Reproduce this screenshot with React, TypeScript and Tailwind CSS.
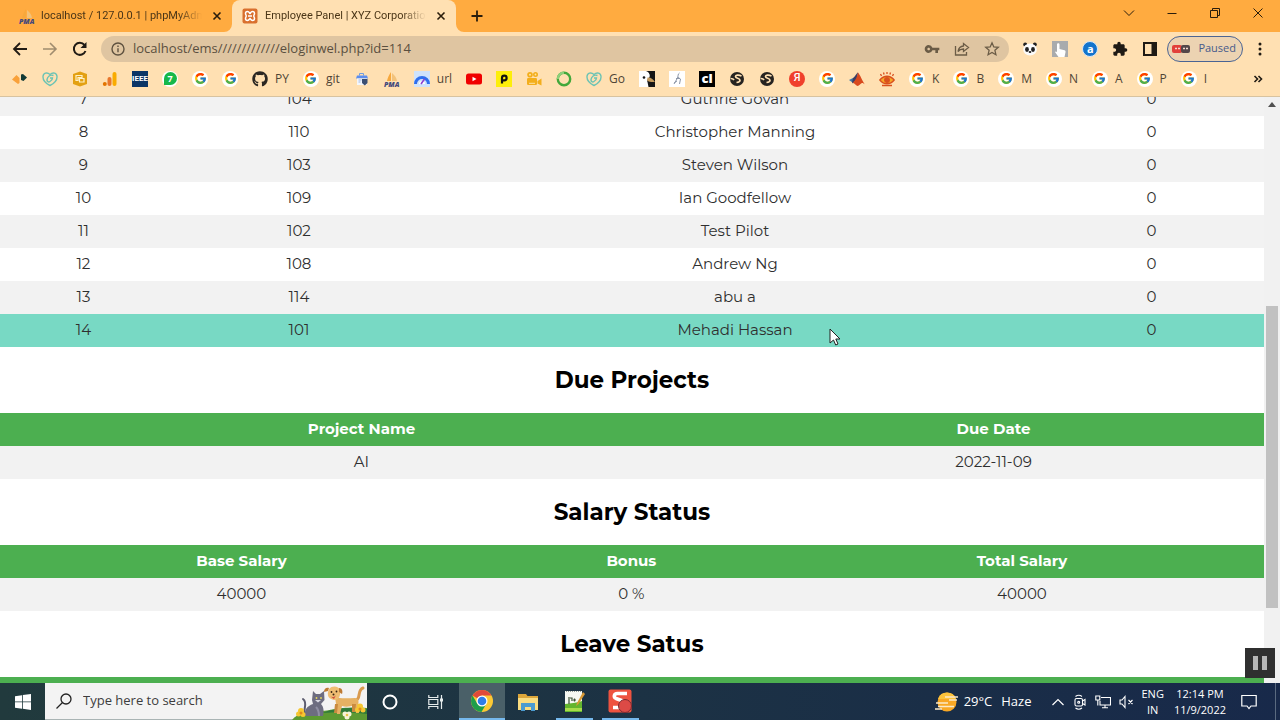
import type { ReactNode } from "react";
import { FaGithub } from "react-icons/fa";
import { FcGoogle } from "react-icons/fc";
import { MdExtension, MdVpnKey } from "react-icons/md";

const ranking = [
  { seq: 7, id: 104, name: "Guthrie Govan", points: 0 },
  { seq: 8, id: 110, name: "Christopher Manning", points: 0 },
  { seq: 9, id: 103, name: "Steven Wilson", points: 0 },
  { seq: 10, id: 109, name: "Ian Goodfellow", points: 0 },
  { seq: 11, id: 102, name: "Test Pilot", points: 0 },
  { seq: 12, id: 108, name: "Andrew Ng", points: 0 },
  { seq: 13, id: 114, name: "abu a", points: 0 },
  { seq: 14, id: 101, name: "Mehadi Hassan", points: 0 },
];

/* ---------- bookmark icons ---------- */

function Google() {
  return (
    <span className="flex size-4 items-center justify-center rounded-full bg-white">
      <FcGoogle className="size-[13px]" />
    </span>
  );
}

function Diamonds() {
  return (
    <svg viewBox="0 0 16 16" className="size-4">
      <path d="M0 8.500 4.500 4l3 3v5l-1.500 1Z" fill="#f9a13a" />
      <path d="M9 3.500 11 3l4 3.500L11.500 10 9 9Z" fill="#123a35" />
    </svg>
  );
}

function Loops() {
  return (
    <svg viewBox="0 0 16 16" className="size-4" fill="none" stroke="#6cc3b4" strokeWidth="1.400">
      <path d="M8 14.500C3 12 .8 8.500 1 5.500 1.200 2 5 .8 8 3.500c3-2.700 6.800-1.500 7 2C15.200 8.500 13 12 8 14.500Z" />
      <path d="M11.500 4.500C8 3 5.500 6 5 8.500c-.3 2 1.500 3 3 2 1.500-.8 2.500-2 2.500-3.500H8" />
    </svg>
  );
}

function GoldBox() {
  return (
    <svg viewBox="0 0 16 16" className="size-4">
      <path d="M8 .5 15 3v10l-7 2.500L1 13V3Z" fill="#e3a012" />
      <path d="M4 4.500h6v2H6v3H4ZM7.500 7.500H12V11H7.500Z" fill="none" stroke="#fff0c4" strokeWidth="1.200" />
    </svg>
  );
}

function Bars() {
  return (
    <svg viewBox="0 0 16 16" className="size-4">
      <rect x="10.500" y="1" width="4" height="14" rx="2" fill="#f9ab00" />
      <rect x="5.500" y="6" width="4" height="9" rx="2" fill="#e8762c" />
      <circle cx="2.800" cy="13" r="2" fill="#e37400" />
    </svg>
  );
}

function Ieee() {
  return (
    <span className="flex size-4 items-center justify-center bg-[#0b3566] font-['Roboto',sans-serif] text-[8px] font-bold text-white">
      IEEE
    </span>
  );
}

function Seven() {
  return (
    <span className="flex size-4 items-center justify-center rounded-full bg-white">
      <span className="flex size-[13px] items-center justify-center rounded-full rounded-bl-sm bg-[#17b84a] text-[9px] font-bold text-white">
        7
      </span>
    </span>
  );
}

function Shop() {
  return (
    <svg viewBox="0 0 16 16" className="size-4">
      <path d="M5.500 4.500V2.500h4v2" fill="none" stroke="#6f9de0" />
      <path d="M3 4.500h10l1 3H2Z" fill="#5b8def" />
      <path d="M3 7.500h10v6.500H3Z" fill="#f3f6fb" />
      <path d="M4.500 9h3M4.500 11h2" stroke="#9bb5e6" />
      <path d="M8 8h5.500v4l-2.700 2.500L8 12Z" fill="#3c4f73" />
    </svg>
  );
}

function Pma({ className = "size-4" }: { className?: string }) {
  return (
    <svg viewBox="0 0 16 16" className={className}>
      <path d="M7 1C5 4 3.500 7 3 10h4Z" fill="#f7a83c" />
      <path d="M8 2c3 2.500 4.500 5 5 8H8Z" fill="#f3c27a" />
      <text x="0" y="15.500" fontSize="7" fontWeight="800" fontStyle="italic" fontFamily="Open Sans, sans-serif" fill="#44497c">
        PMA
      </text>
    </svg>
  );
}

function Gauge() {
  return (
    <svg viewBox="0 0 16 16" className="size-4">
      <rect width="16" height="16" fill="#cfe3fb" />
      <path d="M1.500 13a6.500 6.500 0 0 1 13 0" fill="none" stroke="#2f6fed" strokeWidth="3" />
      <path d="M5 13a3 3 0 0 1 6 0Z" fill="#fff" />
      <path d="m7 13 3.500-5" stroke="#8a3fd1" strokeWidth="1.600" />
    </svg>
  );
}

function Youtube() {
  return (
    <svg viewBox="0 0 16 16" className="size-4">
      <rect x="0" y="2.500" width="16" height="11" rx="2.500" fill="#f00000" />
      <path d="m6.500 5.700 4 2.300-4 2.300Z" fill="#fff" />
    </svg>
  );
}

function YellowP() {
  return (
    <svg viewBox="0 0 16 16" className="size-4">
      <rect width="16" height="16" fill="#fdee0a" />
      <path d="M6 12.500V7a2.300 2.300 0 1 1 2.300 2.300H7" fill="none" stroke="#111" strokeWidth="2.200" />
    </svg>
  );
}

function Camera() {
  return (
    <svg viewBox="0 0 16 16" className="size-4" fill="#f3ae1c">
      <circle cx="4" cy="3.800" r="2.800" />
      <circle cx="9.500" cy="3.500" r="2.500" />
      <rect x="1" y="7" width="10" height="7" rx="1.200" />
      <path d="m11.500 10 4-2.500v7l-4-2Z" />
      <circle cx="4" cy="3.800" r="1" fill="#fde3a7" />
      <circle cx="9.500" cy="3.500" r=".9" fill="#fde3a7" />
      <path d="M3 12.300h6" stroke="#fde3a7" />
    </svg>
  );
}

function GreenRing() {
  return (
    <svg viewBox="0 0 16 16" className="size-4" fill="none" strokeWidth="2.400">
      <circle cx="8" cy="8" r="6.200" stroke="#43a83b" />
      <path d="M1.800 8A6.200 6.200 0 0 1 8 1.800" stroke="#8fcf7a" />
    </svg>
  );
}

function Bird() {
  return (
    <svg viewBox="0 0 16 16" className="size-4">
      <rect width="16" height="16" fill="#151515" />
      <path d="M0 0h7c3 1 4.500 4 3.500 6-1 2-3 3-2 5l1 5H0Z" fill="#fff" />
      <path d="M8.500 6.500c3-.5 5 1 7.500 4.500-3 .3-6 0-8-1.500Z" fill="#c49a5c" />
      <circle cx="5" cy="6.500" r="1.300" fill="#151515" />
    </svg>
  );
}

function Sketch() {
  return (
    <svg viewBox="0 0 16 16" className="size-4">
      <rect width="16" height="16" fill="#fff" />
      <path d="M10.500 2c-2 1-1 3-2 5L5 13M8.500 6l3 2-1 5M7 7.500h4M5 12l3-2" fill="none" stroke="#8d97a8" />
    </svg>
  );
}

function Cl() {
  return (
    <span className="flex size-4 items-center justify-center bg-black text-[13px] leading-none font-extrabold text-white">
      cl
    </span>
  );
}

function Globe() {
  return (
    <svg viewBox="0 0 16 16" className="size-4">
      <circle cx="8" cy="8" r="7" fill="#262320" />
      <path d="M12.500 5c-3-1.500-6-1-6 .5 0 2 4.500 1.500 4.500 3.700 0 1.300-1.500 2-3.500 2.300M1.500 7.500c2 0 3 .5 3.500 1.500" fill="none" stroke="#ffe0b2" strokeWidth="1.700" />
    </svg>
  );
}

function Yandex() {
  return (
    <span className="flex size-4 items-center justify-center rounded-full bg-[#f0402c] font-['Roboto',sans-serif] text-[11px] font-medium text-white">
      Я
    </span>
  );
}

function Matlab() {
  return (
    <svg viewBox="0 0 16 16" className="size-4">
      <path d="m0 9 4-2 2 2-2.500 2.500Z" fill="#3e77a8" />
      <path d="M4 7c2-1 3.500-5 5-5.500L8 8l-4 4.500-1-1Z" fill="#3b3f66" />
      <path d="M9 1.500c2 2 4 8 7 12-2-1.500-3-2-4.500-.5C10 14.500 9 15.500 7.500 14.500L4 11.500C6.500 9.500 8 6 9 1.500Z" fill="#d8491e" />
    </svg>
  );
}

function Eye() {
  return (
    <svg viewBox="0 0 16 16" className="size-4" fill="none" stroke="#d9501e" strokeWidth="1.300">
      <path d="M.8 9c4-5 10.400-5 14.400 0-4 5-10.400 5-14.400 0Z" fill="#f7a828" />
      <circle cx="8" cy="9" r="2.300" fill="#d9501e" />
      <path d="m1.500 3 1 2M4.500 1.500l.6 2M8 1v2M11.500 1.500l-.6 2M14.500 3l-1 2M3 14.500h10" />
    </svg>
  );
}

const bookmarks: { icon: ReactNode; label?: string }[] = [
  { icon: <Diamonds /> },
  { icon: <Loops /> },
  { icon: <GoldBox /> },
  { icon: <Bars /> },
  { icon: <Ieee /> },
  { icon: <Seven /> },
  { icon: <Google /> },
  { icon: <Google /> },
  { icon: <FaGithub className="size-4 text-[#2b2722]" />, label: "PY" },
  { icon: <Google />, label: "git" },
  { icon: <Shop /> },
  { icon: <Pma /> },
  { icon: <Gauge />, label: "url" },
  { icon: <Youtube /> },
  { icon: <YellowP /> },
  { icon: <Camera /> },
  { icon: <GreenRing /> },
  { icon: <Loops />, label: "Go" },
  { icon: <Bird /> },
  { icon: <Sketch /> },
  { icon: <Cl /> },
  { icon: <Globe /> },
  { icon: <Globe /> },
  { icon: <Yandex /> },
  { icon: <Google /> },
  { icon: <Matlab /> },
  { icon: <Eye /> },
  { icon: <Google />, label: "K" },
  { icon: <Google />, label: "B" },
  { icon: <Google />, label: "M" },
  { icon: <Google />, label: "N" },
  { icon: <Google />, label: "A" },
  { icon: <Google />, label: "P" },
  { icon: <Google />, label: "I" },
];

/* ---------- browser chrome ---------- */

function CloseX() {
  return (
    <svg viewBox="0 0 10 10" className="size-[10px]" stroke="#2a1d0c" strokeWidth="1.600">
      <path d="m1.500 1.500 7 7M8.500 1.500l-7 7" />
    </svg>
  );
}

function TabStrip() {
  return (
    <div className="flex h-8 bg-[#ffab40] font-['Roboto',sans-serif] text-[11px] text-[#4a3517]">
      <div className="flex w-[232px] items-center pr-2 pl-[19px]">
        <Pma className="mr-[6px] size-4 shrink-0" />
        <span className="min-w-0 flex-1 overflow-hidden mask-r-from-85% whitespace-nowrap">
          localhost / 127.0.0.1 | phpMyAdmin
        </span>
        <button aria-label="Close tab" className="ml-2 p-[2px]">
          <CloseX />
        </button>
      </div>
      <div className="relative flex w-[224px] items-center rounded-t-lg bg-[#ffe0b2] pr-2 pl-[10px]">
        <svg viewBox="0 0 8 8" className="absolute bottom-0 -left-2 size-2">
          <path d="M8 0v8H0a8 8 0 0 0 8-8Z" fill="#ffe0b2" />
        </svg>
        <svg viewBox="0 0 8 8" className="absolute -right-2 bottom-0 size-2">
          <path d="M0 0v8h8a8 8 0 0 1-8-8Z" fill="#ffe0b2" />
        </svg>
        <svg viewBox="0 0 16 16" className="mr-[7px] size-4 shrink-0">
          <rect x=".5" y=".5" width="15" height="15" rx="2" fill="#d9702e" />
          <path d="M5.500 3.500C7 3.500 7.500 5 8 5.500c.5-.5 1-2 2.500-2s2 1 2 2-.7 1.500-.7 2.500.7 1.500.7 2.500-.5 2-2 2-2-1.500-2.500-2c-.5.500-1 2-2.500 2s-2-1-2-2 .7-1.500.7-2.500-.7-1.500-.7-2.500.5-2 2-2Z" fill="none" stroke="#fff" strokeWidth="1.500" />
          <path d="M6 8h4" stroke="#fff" strokeWidth="1.500" />
        </svg>
        <span className="min-w-0 flex-1 overflow-hidden mask-r-from-85% whitespace-nowrap">
          Employee Panel | XYZ Corporation
        </span>
        <button aria-label="Close tab" className="ml-2 p-[2px]">
          <CloseX />
        </button>
      </div>
      <button aria-label="New tab" className="ml-[13px] p-[2px]">
        <svg viewBox="0 0 12 12" className="size-3" stroke="#2a1d0c" strokeWidth="1.800">
          <path d="M6 .5v11M.5 6h11" />
        </svg>
      </button>
      <div className="mr-px ml-auto flex h-[26px]">
        <button aria-label="Search tabs" className="flex w-[43px] items-center justify-center">
          <svg viewBox="0 0 12 12" className="size-3" fill="none" stroke="#2a1d0c">
            <path d="m1 3.500 5 5 5-5" />
          </svg>
        </button>
        <button aria-label="Minimize" className="flex w-[43px] items-center justify-center">
          <svg viewBox="0 0 12 12" className="size-3" stroke="#2a1d0c">
            <path d="M1.500 6.500h9" />
          </svg>
        </button>
        <button aria-label="Restore" className="flex w-[43px] items-center justify-center">
          <svg viewBox="0 0 12 12" className="size-3" fill="none" stroke="#2a1d0c">
            <path d="M1.500 3.500h7v7h-7ZM3.500 3.500v-2h7v7h-2" />
          </svg>
        </button>
        <button aria-label="Close" className="flex w-[43px] items-center justify-center">
          <svg viewBox="0 0 12 12" className="size-3" stroke="#2a1d0c">
            <path d="m1.500 1.500 9 9M10.500 1.500l-9 9" />
          </svg>
        </button>
      </div>
    </div>
  );
}

function Toolbar() {
  return (
    <div className="flex h-[33px] items-center pr-3 pl-3">
      <button aria-label="Back" className="mr-[14px]">
        <svg viewBox="0 0 16 16" className="size-4" fill="none" stroke="#211b14" strokeWidth="1.800">
          <path d="M15 8H2M8 2 2 8l6 6" />
        </svg>
      </button>
      <button aria-label="Forward" className="mr-[14px]">
        <svg viewBox="0 0 16 16" className="size-4" fill="none" stroke="#a08c6e" strokeWidth="1.600">
          <path d="M1 8h13M8 2l6 6-6 6" />
        </svg>
      </button>
      <button aria-label="Reload" className="mr-[13px]">
        <svg viewBox="0 0 16 16" className="size-4" fill="none" stroke="#211b14" strokeWidth="2">
          <path d="M13.500 10A6 6 0 1 1 12.500 4" />
          <path d="M14.500 1v6h-6Z" fill="#211b14" stroke="none" />
        </svg>
      </button>
      <div className="flex h-[26px] flex-1 items-center rounded-full bg-[#dfc5a1] pr-[9px] pl-[10px]">
        <svg viewBox="0 0 14 14" className="mr-2 size-[14px]" fill="none" stroke="#5f5240" strokeWidth="1.400">
          <circle cx="7" cy="7" r="6" />
          <path d="M7 6.300v4M7 3.500v1.500" />
        </svg>
        <input
          aria-label="Address"
          defaultValue="localhost/ems/////////////eloginwel.php?id=114"
          className="min-w-0 flex-1 bg-transparent text-[13px] text-[#5a4f3f] outline-none"
        />
        <div className="flex items-center gap-[14px] text-[#6b5c46]">
          <MdVpnKey className="size-4" />
          <svg viewBox="0 0 16 16" className="size-4" fill="none" stroke="currentColor" strokeWidth="1.300">
            <path d="M1.500 5v9h11v-3" />
            <path d="M9.500 2.500V5C6 5.200 4.500 7.500 4 10.500c1.500-2 3-2.500 5.500-2.500v2.500l5-4Z" />
          </svg>
          <svg viewBox="0 0 16 16" className="size-4" fill="none" stroke="currentColor" strokeWidth="1.300">
            <path d="m8 1.800 1.800 4.100 4.500.4-3.400 3 1 4.400L8 11.400l-3.900 2.300 1-4.400-3.400-3 4.500-.4Z" />
          </svg>
        </div>
      </div>
      <div className="mr-[9px] ml-[13px] flex items-center gap-[14px]">
        <svg viewBox="0 0 16 16" className="size-4">
          <circle cx="3.200" cy="3.500" r="2" fill="#222" />
          <circle cx="12.800" cy="3.500" r="2" fill="#222" />
          <ellipse cx="8" cy="8.500" rx="6.800" ry="6" fill="#fbfbfb" />
          <ellipse cx="5" cy="8.500" rx="1.900" ry="2.400" fill="#222" />
          <ellipse cx="11" cy="8.500" rx="1.900" ry="2.400" fill="#222" />
          <ellipse cx="8" cy="11" rx="1.300" ry=".9" fill="#222" />
        </svg>
        <svg viewBox="0 0 16 16" className="size-4">
          <rect width="16" height="16" fill="#a9abad" />
          <path d="M5 3.500c0-1.800 2.500-1.800 2.500 0V8l5 1.200c1 .3 1.200 1 1 2L12.500 16H6.500L3 11c.5-1 1.500-.5 2 0Z" fill="#fff" />
        </svg>
        <span className="flex size-4 items-center justify-center rounded-full border border-[#d6e7f7] bg-[#1474cc] text-[11px] leading-none font-bold text-white">
          a
        </span>
        <MdExtension className="size-4 text-[#1f1a14]" />
        <svg viewBox="0 0 16 16" className="size-4">
          <rect x="2" y="2" width="12" height="12" fill="none" stroke="#1f1a14" strokeWidth="2" />
          <rect x="9.500" y="2" width="4.500" height="12" fill="#1f1a14" />
        </svg>
      </div>
      <button className="mr-[9px] flex h-[26px] items-center rounded-full border border-[#4a6493] bg-[#ecd3b2] px-1 text-[11px] text-[#465a8c]">
        <svg viewBox="0 0 18 8" className="mr-2 w-[18px]">
          <rect width="10" height="8" rx="2" fill="#e2403a" />
          <rect x="9" width="9" height="8" rx="2" fill="#54474a" />
          <path d="M3 3.500h5M11 3.500h5" stroke="#f5d9d0" strokeWidth="1.400" strokeDasharray="2 1" />
        </svg>
        <span className="pr-[2px]">Paused</span>
      </button>
      <button aria-label="Menu">
        <svg viewBox="0 0 16 16" className="size-4" fill="#211b14">
          <circle cx="8" cy="3" r="1.500" />
          <circle cx="8" cy="8" r="1.500" />
          <circle cx="8" cy="13" r="1.500" />
        </svg>
      </button>
    </div>
  );
}

function BookmarksBar() {
  return (
    <nav className="flex h-8 items-center border-b border-[#d8c3a0] px-[5px] pb-1 text-[12px] text-[#4f4536]">
      {bookmarks.map((b, i) => (
        <a key={i} href="#" className="flex shrink-0 items-center gap-[7px] px-[7px]">
          {b.icon}
          {b.label && <span>{b.label}</span>}
        </a>
      ))}
      <button aria-label="More bookmarks" className="mr-3 ml-auto">
        <svg viewBox="0 0 10 10" className="size-[10px]" fill="none" stroke="#211b14" strokeWidth="1.600">
          <path d="m1.500 2 3 3-3 3M5.500 2l3 3-3 3" />
        </svg>
      </button>
    </nav>
  );
}

/* ---------- employee page ---------- */

function Heading({ children }: { children: ReactNode }) {
  return (
    <h2 className="flex h-[66px] items-center justify-center text-[23px] font-bold text-black">
      {children}
    </h2>
  );
}

function DataTable({ cols, head, rows }: { cols: string[]; head: string[]; rows: string[][] }) {
  return (
    <table className="w-full table-fixed border-collapse text-center">
      <thead>
        <tr className="h-[33px] bg-[#4caf50] text-white">
          {head.map((h, i) => (
            <th key={h} className={`${cols[i]} p-0 font-bold`}>
              {h}
            </th>
          ))}
        </tr>
      </thead>
      <tbody>
        {rows.map((r, i) => (
          <tr key={i} className="h-[33px] bg-[#f2f2f2]">
            {r.map((c, j) => (
              <td key={j} className="p-0">
                {c}
              </td>
            ))}
          </tr>
        ))}
      </tbody>
    </table>
  );
}

function EmployeePage() {
  return (
    <main className="min-w-0 flex-1 overflow-hidden bg-white font-['Montserrat','Inter',sans-serif] text-[15px] text-[#2f2f2f]">
      {/* scrolled part way through the leaderboard */}
      <table className="-mt-[14px] w-full table-fixed border-collapse text-center">
        <colgroup>
          <col className="w-[13.2%]" />
          <col className="w-[20.9%]" />
          <col className="w-[48.1%]" />
          <col className="w-[17.8%]" />
        </colgroup>
        <tbody>
          {ranking.map((r) => (
            <tr
              key={r.id}
              className={
                r.seq === 14 ? "h-[33px] bg-[#78d9c4]" : "h-[33px] bg-white odd:bg-[#f2f2f2]"
              }
            >
              <td className="p-0">{r.seq}</td>
              <td className="p-0">{r.id}</td>
              <td className="p-0">{r.name}</td>
              <td className="p-0">{r.points}</td>
            </tr>
          ))}
        </tbody>
      </table>
      <Heading>Due Projects</Heading>
      <DataTable
        cols={["w-[57.2%]", "w-[42.8%]"]}
        head={["Project Name", "Due Date"]}
        rows={[["AI", "2022-11-09"]]}
      />
      <Heading>Salary Status</Heading>
      <DataTable
        cols={["w-[38.2%]", "w-[23.5%]", "w-[38.3%]"]}
        head={["Base Salary", "Bonus", "Total Salary"]}
        rows={[["40000", "0 %", "40000"]]}
      />
      <Heading>Leave Satus</Heading>
      <div className="h-[33px] bg-[#4caf50]" />
    </main>
  );
}

function Scrollbar() {
  return (
    <div className="flex w-4 flex-col items-center bg-[#f1f1f1]">
      <svg viewBox="0 0 16 16" className="size-4" fill="#505050">
        <path d="m8 5 4 5H4Z" />
      </svg>
      <div className="mt-[193px] h-[302px] w-[12px] bg-[#c1c1c1]" />
    </div>
  );
}

/* ---------- taskbar ---------- */

function Pets() {
  return (
    <svg viewBox="0 0 75 37" className="h-[37px] w-[75px]">
      <path d="M0 37c6-7 14-9 26-9 16 0 20-5 49-3v12Z" fill="#5d9a32" />
      <path d="M30 30c12-5 26-6 45-4v5c-16-2-30-2-45-1Z" fill="#2f7a3a" />
      {/* cat */}
      <path d="M14 32C9 30 17 20 11 16" fill="none" stroke="#5c5c6e" strokeWidth="2" strokeLinecap="round" />
      <path d="M13 33c-1-6 2-10 8-12l-1-4 1-9 3 3h4l4-3 .5 9-3.500 4c3 3 3 8 2 12Z" fill="#6d6d80" />
      <path d="M24 24c2 2 3 6 3 9" fill="none" stroke="#8f8fa3" strokeWidth="2" />
      <path d="M23 17h6l-3 2.500Z" fill="#d9d9e2" />
      <circle cx="24.500" cy="15" r=".9" fill="#e8d95a" />
      <circle cx="29" cy="15" r=".9" fill="#e8d95a" />
      {/* dog */}
      <path d="M64 17c5-1 1-10 7-12" fill="none" stroke="#d99a4e" strokeWidth="3" strokeLinecap="round" />
      <path d="M43 14c6 2 14 1 20 1 4 1 4 4 3 7l1 8h-3l-2-8c-4 2-9 2-12 1l-2 8h-3l-1-10Z" fill="#e6b163" />
      <path d="M42 30h3l1-9h-3ZM60 29h3l1-8h-4Z" fill="#c98a3f" />
      <path d="M37 6c3-4 10-3 11 1 1 5-1 10-6 10-5-1-8-4-5-11Z" fill="#efbd72" />
      <path d="M37 5c-3-1-5 1-5 4l4-1ZM47 5c3 0 4 3 3 6l-3-2Z" fill="#bd7a33" />
      <path d="M38 13c2 2 5 1 6-1l-2 4Z" fill="#d04a3c" />
      <circle cx="39.500" cy="9" r=".9" fill="#3a2412" />
      <circle cx="44.500" cy="8.500" r=".9" fill="#3a2412" />
      <circle cx="41.500" cy="11.500" r="1" fill="#3a2412" />
      {/* flowers */}
      <g fill="#f6c731">
        <circle cx="9" cy="28" r="3" />
        <circle cx="6.500" cy="31" r="2.500" />
        <circle cx="11" cy="31.500" r="2.500" />
        <circle cx="68" cy="23.500" r="3" />
        <circle cx="65.500" cy="27" r="2.500" />
        <circle cx="71" cy="27" r="2.500" />
      </g>
      <circle cx="9" cy="30" r="1.500" fill="#e08a1c" />
      <circle cx="68" cy="26" r="1.500" fill="#e08a1c" />
      <g fill="#f7f3d8">
        <circle cx="53" cy="31" r="2.500" />
        <circle cx="57" cy="31" r="2.500" />
        <circle cx="55" cy="34" r="2.500" />
      </g>
      <circle cx="55" cy="32" r="1.300" fill="#e8c64a" />
    </svg>
  );
}

function ChromeLogo() {
  return (
    <svg viewBox="0 0 24 24" className="size-6">
      <circle cx="12" cy="12" r="11" fill="#fcc934" />
      <path d="M12 12 2.500 6.500A11 11 0 0 1 21.500 6.500H12Z" fill="#e04a3a" />
      <path d="M2.500 6.500A11 11 0 0 0 11.500 23l5-8.500L12 12 7.500 15Z" fill="#1e9e4a" />
      <circle cx="12" cy="12" r="5.500" fill="#fff" />
      <circle cx="12" cy="12" r="4.300" fill="#2f7de9" />
    </svg>
  );
}

function Explorer() {
  return (
    <svg viewBox="0 0 22 20" className="w-[22px]">
      <path d="M1 2h8l1.500 2H21v14H1Z" fill="#dca63a" />
      <path d="M1 6h20v12H1Z" fill="#f9dc80" />
      <path d="M4 19v-8h14v8h-4v-4H8v4Z" fill="#4a9bd0" />
    </svg>
  );
}

function NotepadPlus() {
  return (
    <svg viewBox="0 0 22 24" className="w-[22px]">
      <path d="M2 2h17v21H2Z" fill="#f6f8f2" />
      <path d="M2 15c6-1 11-1 17-3v11H2Z" fill="#63b52e" />
      <path d="M2 19h17v3H2Z" fill="#a8dc4a" />
      <path d="M3 2.500h15" stroke="#98a096" strokeDasharray="1 1" />
      <path d="M6 8v7M7 9h2v3M10 11h3M11.500 9.500v3" stroke="#3d5136" strokeWidth="1.200" fill="none" />
      <path d="m20 3-6 11-1 3 2.500-2L22 5Z" fill="#d99a35" />
    </svg>
  );
}

function Recorder() {
  return (
    <svg viewBox="0 0 24 24" className="size-6">
      <rect x=".5" y=".5" width="23" height="23" rx="2" fill="#ee5340" />
      <path d="M19 4.500H9.500C5.500 4.500 5.500 8.500 8 9.500l7 2.500" fill="none" stroke="#fff" strokeWidth="3.500" />
      <path d="M5 18.500h7" fill="none" stroke="#fff" strokeWidth="3.500" />
      <circle cx="17" cy="17" r="6.500" fill="#dc4a46" stroke="#7a2a30" />
    </svg>
  );
}

function TaskButton({ label, state = "", children }: { label: string; state?: string; children: ReactNode }) {
  return (
    <button aria-label={label} className={`flex h-full w-[46px] flex-col items-center ${state === "active" ? "bg-[#4a6068]" : ""}`}>
      <span className="flex flex-1 items-center">{children}</span>
      {state === "active" && <span className="h-[2px] w-full bg-[#76b9ed]" />}
      {state === "open" && <span className="h-[2px] w-[37px] bg-[#76b9ed]" />}
    </button>
  );
}

function Taskbar() {
  return (
    <footer className="flex h-[37px] shrink-0 items-center bg-linear-to-r from-[#213a3d] to-[#18294a] text-white">
      <button aria-label="Start" className="flex h-full w-[45px] items-center justify-center">
        <svg viewBox="0 0 16 16" className="size-4" fill="#fff">
          <path d="M0 2.200 7 1.200v6.300H0ZM7.800 1.100 16 0v7.500H7.800ZM0 8.300h7v6.400l-7-1ZM7.800 8.300H16V16l-8.200-1.200Z" />
        </svg>
      </button>
      <label className="flex h-full w-[322px] items-center border-b border-[#a9b4b4] bg-[#f3f3f3] pl-[11px]">
        <svg viewBox="0 0 16 16" className="mr-[11px] size-4 shrink-0" fill="none" stroke="#222" strokeWidth="1.300">
          <circle cx="10" cy="6" r="5" />
          <path d="m6.500 9.500-6 6" />
        </svg>
        <input
          aria-label="Search"
          placeholder="Type here to search"
          className="min-w-0 flex-1 bg-transparent text-[13px] text-[#333] outline-none placeholder:text-[#3d3d3d]"
        />
        <Pets />
      </label>
      <TaskButton label="Cortana">
        <svg viewBox="0 0 16 16" className="size-4" fill="none" stroke="#fff" strokeWidth="2">
          <circle cx="8" cy="8" r="6.500" />
        </svg>
      </TaskButton>
      <TaskButton label="Task view">
        <svg viewBox="0 0 16 16" className="size-4" fill="none" stroke="#e6ecec" strokeWidth="1.200">
          <path d="M.8 1v2.500h9V1M.8 15v-2.500h9V15M.8 5.500h9v5h-9ZM13.500 1v14" />
          <path d="M12 4.500h3v3h-3Z" fill="#e6ecec" stroke="none" />
        </svg>
      </TaskButton>
      <TaskButton label="Google Chrome" state="active">
        <ChromeLogo />
      </TaskButton>
      <TaskButton label="File Explorer">
        <Explorer />
      </TaskButton>
      <TaskButton label="Notepad++" state="open">
        <NotepadPlus />
      </TaskButton>
      <TaskButton label="Screen recorder" state="open">
        <Recorder />
      </TaskButton>

      <div className="ml-auto flex h-full items-center">
        <svg viewBox="0 0 24 20" className="mr-[5px] w-6">
          <circle cx="12" cy="10" r="9.500" fill="#f9a825" />
          <path d="M3 7a9.500 9.500 0 0 1 18 0Z" fill="#fcc33c" />
          <path d="M10 5h13M1 11h12M14 8h8M3 14.500h16M0 17h7" stroke="#fbe9c8" strokeWidth="1.300" />
        </svg>
        <span className="mr-5 flex gap-[9px] text-[13px]">
          <span>29°C</span>
          <span>Haze</span>
        </span>
        <div className="mr-[7px] flex items-center gap-[8px]">
          <svg viewBox="0 0 14 14" className="size-[14px]" fill="none" stroke="#fff" strokeWidth="1.200">
            <path d="m1.500 10 5.500-5.500L12.500 10" />
          </svg>
          <svg viewBox="0 0 14 16" className="w-[14px]" fill="none" stroke="#fff" strokeWidth="1.100">
            <rect x="2" y="4.500" width="7.500" height="7.500" rx="1.500" />
            <path d="m9.500 7 2.500-1.500V11l-2.500-1.500M2.500 2.500c2-1.500 4.500-1.500 6.500 0M2.500 14c2 1.500 4.500 1.500 6.500 0" />
            <circle cx="5.700" cy="8.200" r="1" />
          </svg>
          <svg viewBox="0 0 16 14" className="w-4" fill="none" stroke="#fff" strokeWidth="1.100">
            <path d="M6 2.500h9.500v7.500H5V6M10 10v2.500M7 12.700h6M.8 1h4v4h-4ZM2.800 5v5.500" />
          </svg>
          <svg viewBox="0 0 15 14" className="w-[15px]" fill="none" stroke="#fff" strokeWidth="1.100">
            <path d="M1 5h2l3-3.500v11L3 9H1ZM9.500 5l4 4M13.500 5l-4 4" />
          </svg>
        </div>
        <div className="mr-[10px] text-center text-[11px] leading-4">
          ENG
          <br />
          IN
        </div>
        <div className="mr-[15px] text-center text-[11px] leading-4">
          12:14 PM
          <br />
          11/9/2022
        </div>
        <button aria-label="Notifications" className="mr-[18px]">
          <svg viewBox="0 0 16 16" className="size-4" fill="none" stroke="#fff" strokeWidth="1.200">
            <path d="M.8 1.500h14.400v10.500H10l-2 2.500L6 12H.8Z" />
          </svg>
        </button>
        <span className="mr-[4px] h-full w-px bg-[#5a6a80]" />
      </div>
    </footer>
  );
}

export default function App() {
  return (
    <div className="relative flex h-screen flex-col overflow-hidden font-['Segoe_UI','Open_Sans',sans-serif]">
      <header className="shrink-0 bg-[#ffe0b2]">
        <TabStrip />
        <Toolbar />
        <BookmarksBar />
      </header>
      <div className="flex min-h-0 flex-1">
        <EmployeePage />
        <Scrollbar />
      </div>
      <Taskbar />

      <button
        aria-label="Pause recording"
        className="absolute right-[5px] bottom-[42px] flex size-[30px] items-center justify-center gap-1 bg-[#2f2f2f]"
      >
        <span className="h-[14px] w-[5px] bg-[#b5b5b5]" />
        <span className="h-[14px] w-[5px] bg-[#b5b5b5]" />
      </button>
      <svg viewBox="0 0 12 18" className="absolute top-[328px] left-[829px] w-3">
        <path d="M1 1v14l3.500-3 2.200 5 2.300-1-2.200-5H11Z" fill="#fff" stroke="#222" />
      </svg>
    </div>
  );
}
